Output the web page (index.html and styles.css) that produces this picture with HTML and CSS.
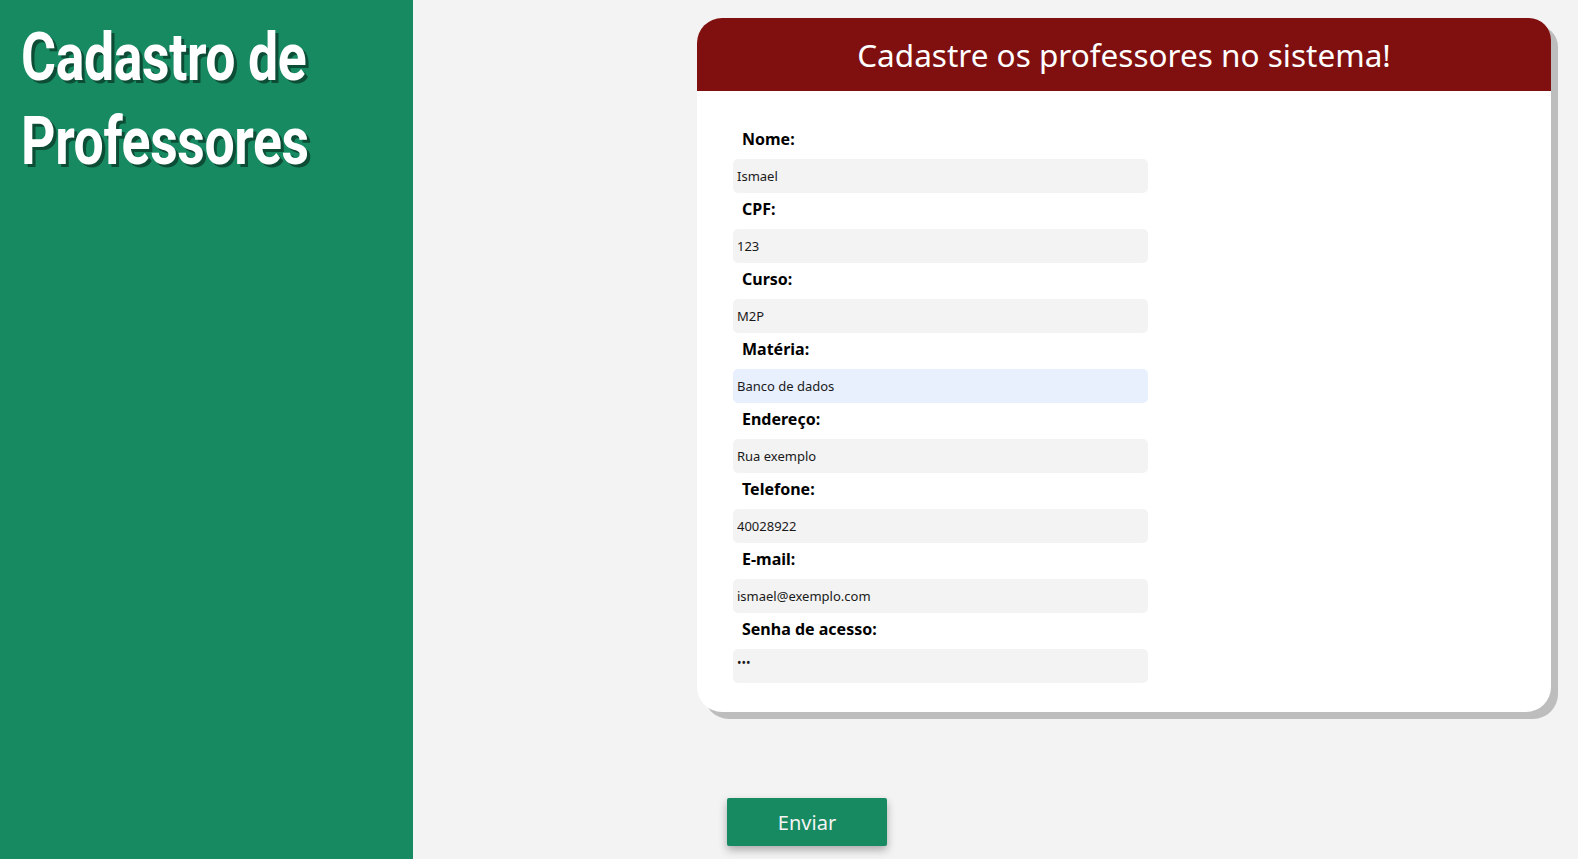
FILE: index.html
```html
<!DOCTYPE html>
<html lang="pt-BR">
<head>
<meta charset="utf-8">
<title>Cadastro de Professores</title>
<link rel="stylesheet" href="styles.css">
</head>
<body>
<aside class="sidebar">
  <h1 class="sidebar-title">Cadastro de<br>Professores</h1>
</aside>
<main class="content">
  <form class="form">
    <div class="card">
      <div class="card-header">
        <h2 class="card-title">Cadastre os professores no sistema!</h2>
      </div>
      <div class="card-body">
        <div class="field">
          <label class="field-label" for="nome">Nome:</label>
          <input class="field-input" id="nome" type="text" value="Ismael">
        </div>
        <div class="field">
          <label class="field-label" for="cpf">CPF:</label>
          <input class="field-input" id="cpf" type="text" value="123">
        </div>
        <div class="field">
          <label class="field-label" for="curso">Curso:</label>
          <input class="field-input" id="curso" type="text" value="M2P">
        </div>
        <div class="field">
          <label class="field-label" for="materia">Matéria:</label>
          <input class="field-input field-input--autofill" id="materia" type="text" value="Banco de dados">
        </div>
        <div class="field">
          <label class="field-label" for="endereco">Endereço:</label>
          <input class="field-input" id="endereco" type="text" value="Rua exemplo">
        </div>
        <div class="field">
          <label class="field-label" for="telefone">Telefone:</label>
          <input class="field-input" id="telefone" type="text" value="40028922">
        </div>
        <div class="field">
          <label class="field-label" for="email">E-mail:</label>
          <input class="field-input" id="email" type="text" value="ismael@exemplo.com">
        </div>
        <div class="field">
          <label class="field-label" for="senha">Senha de acesso:</label>
          <input class="field-input field-input--password" id="senha" type="password" value="abc">
        </div>
      </div>
    </div>
    <button class="submit" type="button">Enviar</button>
  </form>
</main>
</body>
</html>
```

FILE: styles.css
```css
html, body {
  margin: 0;
  padding: 0;
}

body {
  display: flex;
  height: 100vh;
  overflow: hidden;
  background: #f3f3f3;
  font-family: "Noto Sans", "Open Sans", sans-serif;
}

.sidebar {
  width: 413px;
  flex: 0 0 413px;
  background: #178a62;
  padding: 15px 0 0 21px;
  box-sizing: border-box;
}

.sidebar-title {
  margin: 0;
  font-family: Roboto, "Liberation Sans", sans-serif;
  font-weight: bold;
  font-size: 67px;
  line-height: 84px;
  letter-spacing: -0.5px;
  color: #ffffff;
  text-shadow: 4px 3px 0 #0d4d36;
  white-space: nowrap;
  transform: scaleX(0.8);
  transform-origin: left top;
}

.content {
  flex: 1;
  padding: 18px 0 0 284px;
}

.form {
  display: flex;
  flex-direction: column;
  align-items: flex-start;
}

.card {
  width: 854px;
  background: #ffffff;
  border-radius: 25px 22px 25px 25px;
  box-shadow: 7px 7px 0 #bdbdbd;
  overflow: hidden;
}

.card-header {
  height: 73px;
  background: #801010;
  display: flex;
  align-items: center;
  justify-content: center;
}

.card-title {
  margin: 0;
  font-weight: normal;
  font-size: 31.5px;
  color: #ffffff;
}

.card-body {
  padding: 38px 36px 23px 36px;
}

.field {
  display: flex;
  flex-direction: column;
  align-items: flex-start;
  margin-bottom: 6px;
}

.field-label {
  display: block;
  font-weight: bold;
  font-size: 16px;
  line-height: 20px;
  color: #000;
  margin: 0 0 10px 9px;
}

.field-input {
  width: 415px;
  height: 34px;
  box-sizing: border-box;
  border: none;
  border-radius: 5px;
  background: #f3f3f3;
  padding: 0 4px;
  font-family: "Noto Sans", "Open Sans", sans-serif;
  font-size: 13px;
  color: #1a1a1a;
  outline: none;
}

.field-input--autofill {
  background: #e8f0fe;
}

.field-input--password {
  font-size: 12px;
  padding-bottom: 8px;
}

.submit {
  margin: 86px 0 0 30px;
  width: 160px;
  height: 48px;
  border: none;
  border-radius: 2px;
  background: #178a62;
  color: #f4f4f4;
  font-family: "Noto Sans", "Open Sans", sans-serif;
  font-size: 20px;
  box-shadow: 0 4px 8px rgba(0, 0, 0, 0.3);
  cursor: pointer;
}
```
